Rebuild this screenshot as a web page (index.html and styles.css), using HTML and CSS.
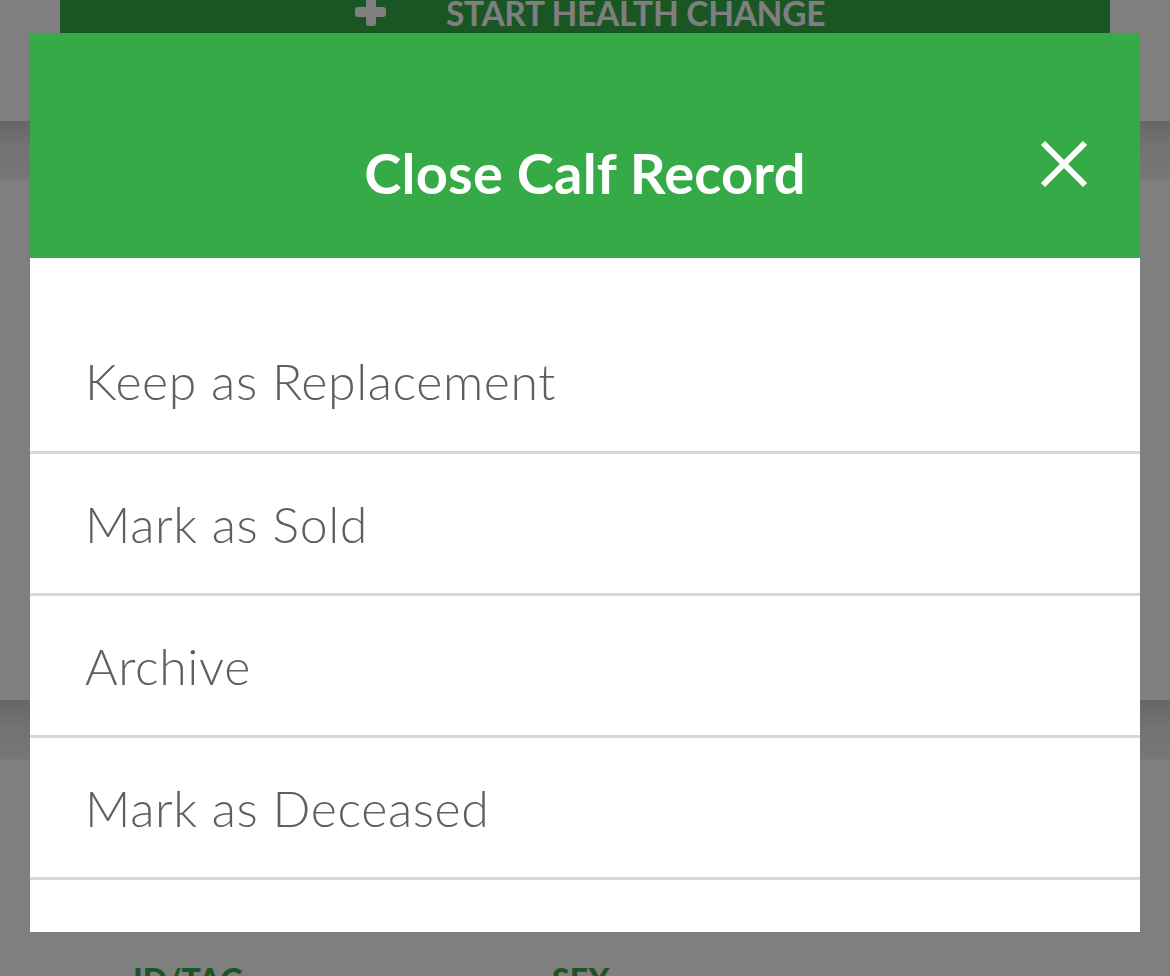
FILE: index.html
```html
<!DOCTYPE html>
<html>
<head>
<meta charset="utf-8">
<link rel="stylesheet" href="styles.css">
</head>
<body>
<div class="page">
  <div class="card top-card">
    <div class="action-btn">
      <span class="plus"></span>
      <span class="action-label">START HEALTH CHANGE</span>
    </div>
  </div>
  <div class="band"></div>
  <div class="card mid-card"></div>
  <div class="band"></div>
  <div class="card details-card">
    <div class="labels">
      <span class="label">ID/TAG</span>
      <span class="label">SEX</span>
    </div>
  </div>
</div>
<div class="overlay"></div>
<div class="modal">
  <div class="modal-header">
    <h1 class="modal-title">Close Calf Record</h1>
    <svg class="close-icon" viewBox="0 0 48 48" width="48" height="48">
      <path d="M3 3 L45 45 M45 3 L3 45" stroke="#fff" stroke-width="6" fill="none"/>
    </svg>
  </div>
  <ul class="options">
    <li class="option">Keep as Replacement</li>
    <li class="option">Mark as Sold</li>
    <li class="option">Archive</li>
    <li class="option">Mark as Deceased</li>
  </ul>
</div>
</body>
</html>
```

FILE: styles.css
```css
html, body {
  margin: 0;
  padding: 0;
  height: 100%;
  overflow: hidden;
}
body {
  background: #ececec;
  font-family: Lato, "Open Sans", sans-serif;
}
.page {
  display: flex;
  flex-direction: column;
}
.card {
  background: #ffffff;
}
.top-card {
  height: 121px;
  overflow: hidden;
}
.action-btn {
  margin: -20px 60px 0;
  height: 65px;
  padding-left: 14px;
  background: #35aa48;
  display: flex;
  align-items: center;
  justify-content: center;
  gap: 60px;
  color: #ffffff;
}
.plus {
  position: relative;
  width: 31px;
  height: 31px;
  margin-left: -4px;
}
.plus::before, .plus::after {
  content: "";
  position: absolute;
  background: #ffffff;
  border-radius: 3px;
}
.plus::before {
  left: 0; right: 0; top: 10px; height: 10px;
}
.plus::after {
  top: -2px; bottom: 2px; left: 11px; width: 10px;
}
.action-label {
  font-size: 33.5px;
  font-weight: 700;
  letter-spacing: -0.3px;
}
.band {
  height: 60px;
  background: linear-gradient(#cdcdcd, #e6e6e6 45%, #ececec 90%, #f2f2f2);
}
.mid-card {
  height: 519px;
}
.details-card {
  height: 300px;
}
.labels {
  display: flex;
  padding: 200px 0 0 133px;
}
.label {
  color: #3aa84a;
  font-weight: 900;
  font-size: 32px;
}
.label:first-child {
  width: 419px;
}
.overlay {
  position: fixed;
  inset: 0;
  background: rgba(0, 0, 0, 0.5);
}
.modal {
  position: fixed;
  left: 30px;
  top: 33px;
  width: 1110px;
  height: 899px;
  background: #ffffff;
  overflow: hidden;
}
.modal-header {
  position: relative;
  height: 225px;
  box-sizing: border-box;
  padding-top: 54px;
  background: #35aa47;
  display: flex;
  align-items: center;
  justify-content: center;
}
.modal-title {
  margin: 0;
  color: #ffffff;
  font-size: 56px;
  font-weight: 700;
  letter-spacing: 0.2px;
}
.close-icon {
  position: absolute;
  right: 52px;
  top: 107px;
}
.options {
  list-style: none;
  margin: 0;
  padding: 52px 0 0;
}
.option {
  height: 139px;
  border-bottom: 3px solid #d8d8d8;
  display: flex;
  align-items: center;
  padding-left: 55px;
  color: #5f5f5f;
  font-size: 50px;
  font-weight: 300;
  letter-spacing: 0.6px;
}
.option:first-child {
  height: 141px;
}
```
